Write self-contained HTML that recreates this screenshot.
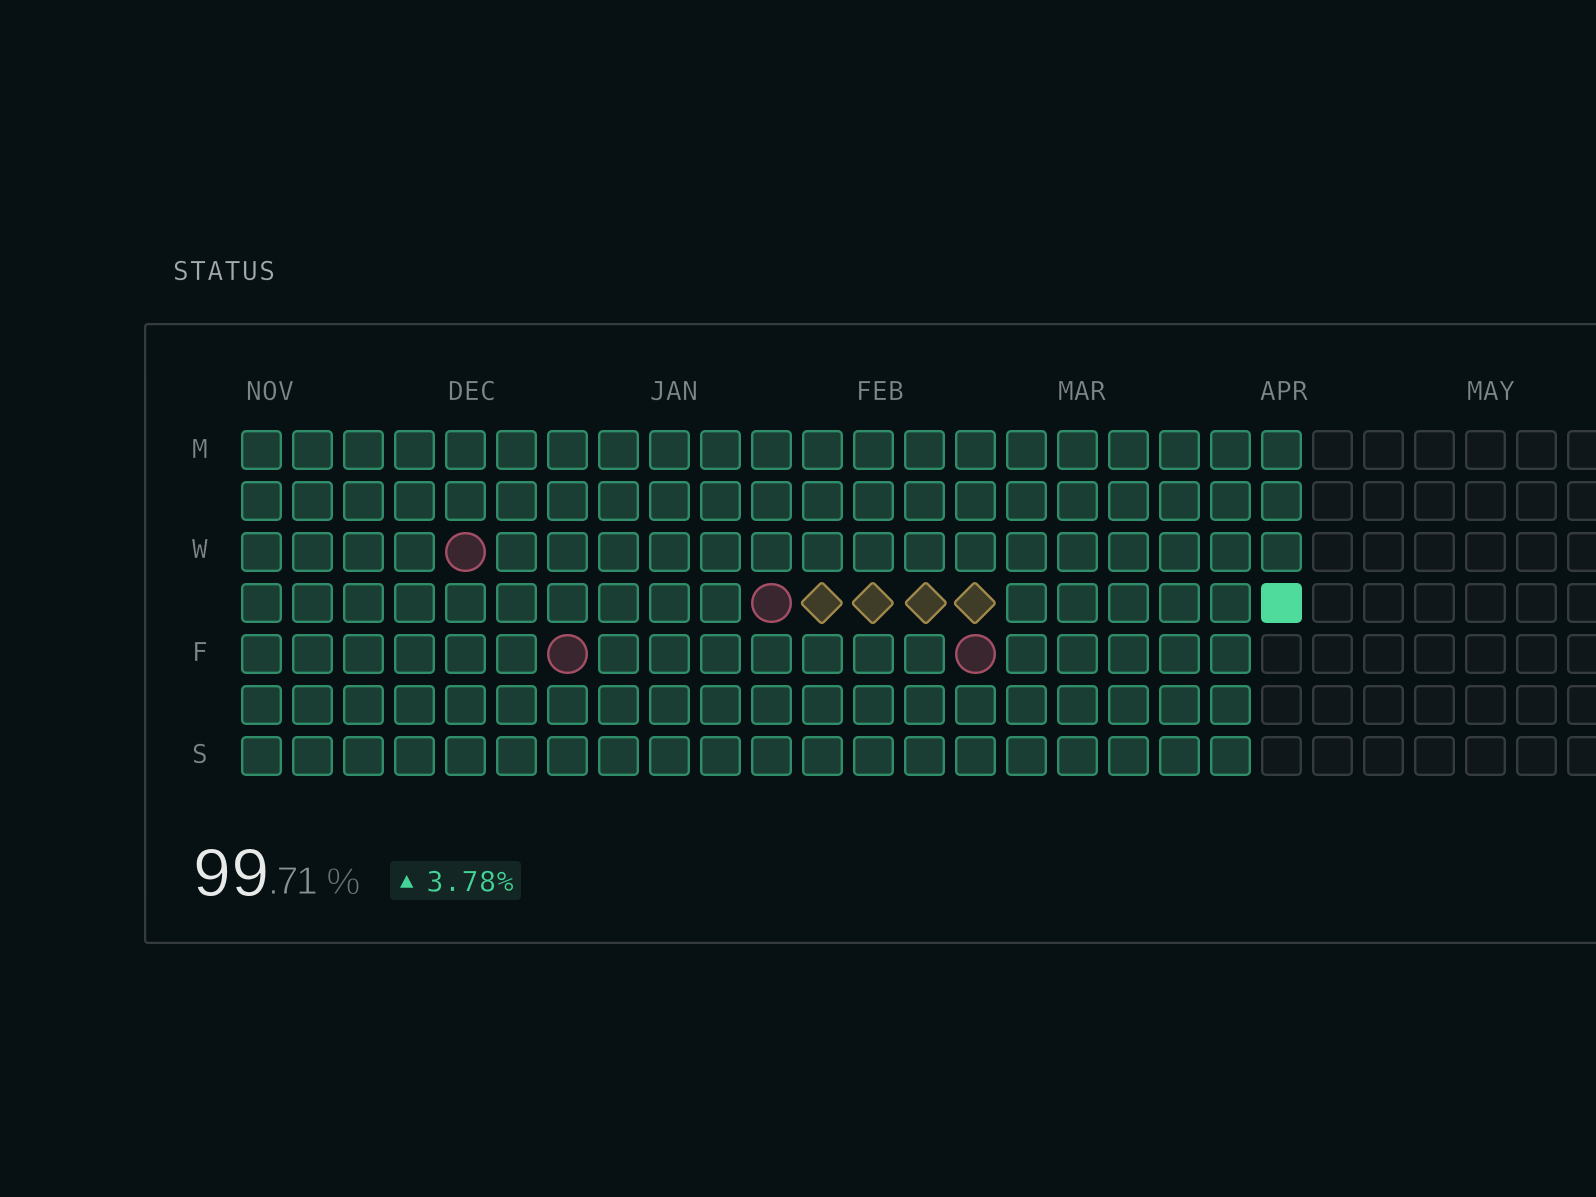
<!DOCTYPE html>
<html><head><meta charset="utf-8"><style>
html,body{margin:0;padding:0;width:1596px;height:1197px;overflow:hidden;background:#071013}
.abs,.t{position:absolute;white-space:nowrap}
.t{font-family:"DejaVu Sans Mono","Liberation Mono",monospace;font-size:26px;line-height:30px;color:#7f8689;letter-spacing:.4px;-webkit-text-stroke:.35px #071013}
#f{position:absolute;left:144px;top:323px;width:1460px;height:621px;box-shadow:inset 0 0 0 2.3px #363c3e;border-radius:4px}
#g{position:absolute;left:241.4px;top:429.8px;display:grid;grid-template-columns:repeat(27,40.5px);grid-auto-rows:40.5px;gap:10.5px}
#g i{display:block;box-shadow:inset 0 0 0 2.4px #2f8d69;background:#1a3e33;border-radius:5px}
#g i.e{box-shadow:inset 0 0 0 2.4px #363c3e;background:#0f171a}
#g i.c{box-shadow:inset 0 0 0 2.4px #a54f67;background:#3a262e;border-radius:50%}
#g i.b{box-shadow:none;background:#4edb9b}
#g i.d{box-shadow:none;background:none;position:relative}
#g i.d::after{content:"";position:absolute;left:4.1px;top:4.4px;width:31.6px;height:31.6px;box-shadow:inset 0 0 0 2.4px #a0894a;background:#3f3c28;border-radius:4px;transform:rotate(45deg)}
.n{position:absolute;white-space:nowrap;font-family:"Liberation Sans",sans-serif;-webkit-text-stroke:1px #071013}
</style></head><body>
<div class="t" style="left:173px;top:257px;color:#a4aaac;letter-spacing:1.6px">STATUS</div>
<div id="f"></div>
<div class="t" style="left:246px;top:377px">NOV</div>
<div class="t" style="left:448px;top:377px">DEC</div>
<div class="t" style="left:650px;top:377px">JAN</div>
<div class="t" style="left:856px;top:377px">FEB</div>
<div class="t" style="left:1058px;top:377px">MAR</div>
<div class="t" style="left:1260px;top:377px">APR</div>
<div class="t" style="left:1467px;top:377px">MAY</div>
<div class="t" style="left:192px;top:435px">M</div>
<div class="t" style="left:192px;top:535px">W</div>
<div class="t" style="left:192px;top:638px">F</div>
<div class="t" style="left:192px;top:740px">S</div>
<div id="g">
<i></i><i></i><i></i><i></i><i></i><i></i><i></i><i></i><i></i><i></i><i></i><i></i><i></i><i></i><i></i><i></i><i></i><i></i><i></i><i></i><i></i><i class="e"></i><i class="e"></i><i class="e"></i><i class="e"></i><i class="e"></i><i class="e"></i>
<i></i><i></i><i></i><i></i><i></i><i></i><i></i><i></i><i></i><i></i><i></i><i></i><i></i><i></i><i></i><i></i><i></i><i></i><i></i><i></i><i></i><i class="e"></i><i class="e"></i><i class="e"></i><i class="e"></i><i class="e"></i><i class="e"></i>
<i></i><i></i><i></i><i></i><i class="c"></i><i></i><i></i><i></i><i></i><i></i><i></i><i></i><i></i><i></i><i></i><i></i><i></i><i></i><i></i><i></i><i></i><i class="e"></i><i class="e"></i><i class="e"></i><i class="e"></i><i class="e"></i><i class="e"></i>
<i></i><i></i><i></i><i></i><i></i><i></i><i></i><i></i><i></i><i></i><i class="c"></i><i class="d"></i><i class="d"></i><i class="d" style="left:2px"></i><i class="d"></i><i></i><i></i><i></i><i></i><i></i><i class="b"></i><i class="e"></i><i class="e"></i><i class="e"></i><i class="e"></i><i class="e"></i><i class="e"></i>
<i></i><i></i><i></i><i></i><i></i><i></i><i class="c"></i><i></i><i></i><i></i><i></i><i></i><i></i><i></i><i class="c"></i><i></i><i></i><i></i><i></i><i></i><i class="e"></i><i class="e"></i><i class="e"></i><i class="e"></i><i class="e"></i><i class="e"></i><i class="e"></i>
<i></i><i></i><i></i><i></i><i></i><i></i><i></i><i></i><i></i><i></i><i></i><i></i><i></i><i></i><i></i><i></i><i></i><i></i><i></i><i></i><i class="e"></i><i class="e"></i><i class="e"></i><i class="e"></i><i class="e"></i><i class="e"></i><i class="e"></i>
<i></i><i></i><i></i><i></i><i></i><i></i><i></i><i></i><i></i><i></i><i></i><i></i><i></i><i></i><i></i><i></i><i></i><i></i><i></i><i></i><i class="e"></i><i class="e"></i><i class="e"></i><i class="e"></i><i class="e"></i><i class="e"></i><i class="e"></i>
</div>
<div class="n" style="left:193px;top:834px;font-size:68px;line-height:78px;color:#e8eaea;letter-spacing:.5px">99</div>
<div class="n" style="left:268px;top:859px;font-size:39px;line-height:46px;color:#8b9193;letter-spacing:-2.2px">.71</div>
<div class="n" style="left:326.5px;top:859px;font-size:38px;line-height:46px;color:#6a7173">%</div>
<div class="abs" style="left:390px;top:861px;width:131px;height:39px;background:#132624;border-radius:4px"></div>
<svg class="abs" style="left:400px;top:875px" width="14" height="13"><path d="M6.7 0L13.4 12.7H0Z" fill="#44d498"/></svg>
<div class="t" style="left:426.5px;top:867px;font-size:28px;color:#44d498;letter-spacing:.7px;-webkit-text-stroke:.35px #132624">3.78%</div>
</body></html>
